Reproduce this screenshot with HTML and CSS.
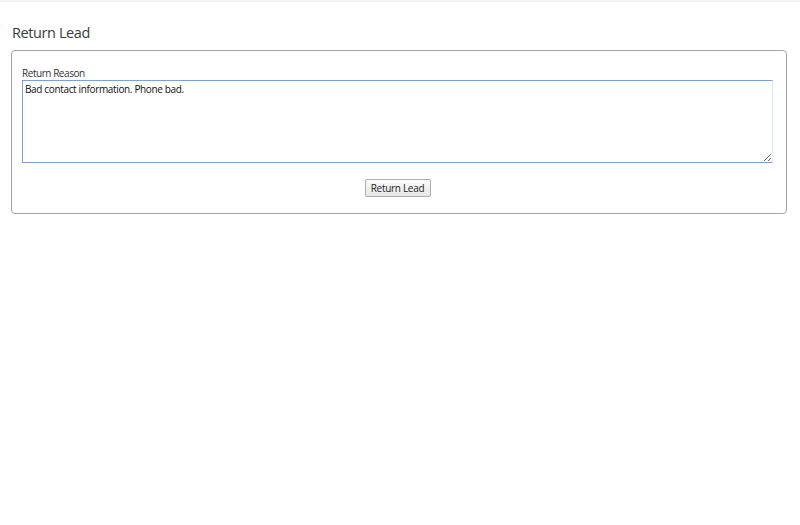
FILE: index.html
```html
<!DOCTYPE html>
<html>
<head>
<meta charset="utf-8">
<link rel="stylesheet" href="styles.css">
</head>
<body>
<div class="topbar"></div>
<div class="page">
  <h1 class="title">Return Lead</h1>
  <div class="panel">
    <label class="label" for="reason">Return Reason</label>
    <textarea id="reason" class="reason">Bad contact information. Phone bad.</textarea>
    <div class="actions">
      <button class="btn">Return Lead</button>
    </div>
  </div>
</div>
</body>
</html>
```
FILE: styles.css
```css
html, body {
  margin: 0;
  padding: 0;
  background: #ffffff;
  font-family: "Open Sans", "Noto Sans", "Liberation Sans", sans-serif;
  color: #333333;
}
.topbar {
  height: 2px;
  background: #eef3fa;
}
.page {
  padding: 0 13px 0 11px;
}
.title {
  margin: 21px 0 0 0;
  font-size: 14.5px;
  line-height: 20px;
  font-weight: normal;
  color: #3a3a3a;
  letter-spacing: -0.4px;
  padding-left: 1px;
}
.panel {
  margin-top: 7px;
  border: 1px solid #a3a3a3;
  border-radius: 4px;
  padding: 16px 13px 16px 10px;
  display: flex;
  flex-direction: column;
}
.label {
  font-size: 10px;
  line-height: 13px;
  color: #333333;
  letter-spacing: -0.45px;
}
.reason {
  display: block;
  box-sizing: border-box;
  width: 100%;
  height: 83px;
  margin: 0;
  border: 1px solid #7b9fd9;
  border-right-color: #dfe7f4;
  border-radius: 0;
  padding: 2px 2px;
  font-family: "Open Sans", "Noto Sans", "Liberation Sans", sans-serif;
  font-size: 10px;
  line-height: 13px;
  color: #111111;
  letter-spacing: -0.35px;
  outline: none;
  resize: vertical;
}
.actions {
  display: flex;
  justify-content: center;
  margin-top: 16px;
}
.btn {
  height: 18px;
  width: 66px;
  padding: 0;
  border: 1px solid #acacac;
  border-radius: 2px;
  background: linear-gradient(#fbfbfb, #e6e6e6);
  font-family: "Open Sans", "Noto Sans", "Liberation Sans", sans-serif;
  font-size: 10px;
  line-height: 16px;
  color: #222222;
  letter-spacing: -0.3px;
}
```
